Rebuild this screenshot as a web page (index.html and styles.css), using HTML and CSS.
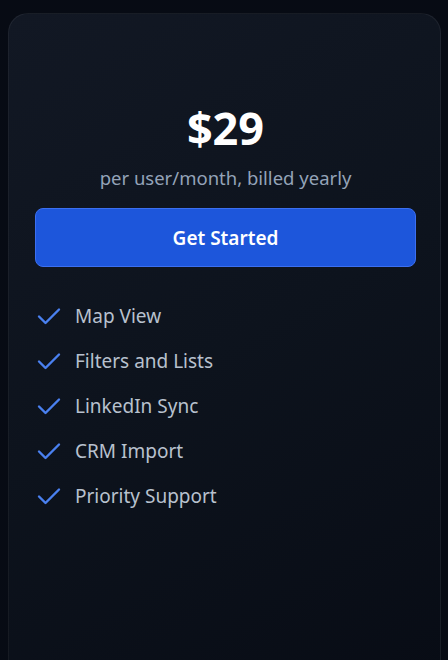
FILE: index.html
```html
<!DOCTYPE html>
<html lang="en">

<head>
    <meta charset="UTF-8">
    <meta name="viewport" content="width=device-width, initial-scale=1.0">
    <title>Pricing</title>
    <link rel="stylesheet" href="styles.css">
</head>

<body>
    <div class="container">
        <div class="plan-card">
            <div class="price">$29</div>
            <p class="price-note">per user/month, billed yearly</p>
            <button type="button" class="start-button">Get Started</button>
            <ul class="features">
                <li>
                    <svg class="check" viewBox="0 0 24 24"><path d="M2 12.5l6.5 6.5L22 5.5" /></svg>
                    <span>Map View</span>
                </li>
                <li>
                    <svg class="check" viewBox="0 0 24 24"><path d="M2 12.5l6.5 6.5L22 5.5" /></svg>
                    <span>Filters and Lists</span>
                </li>
                <li>
                    <svg class="check" viewBox="0 0 24 24"><path d="M2 12.5l6.5 6.5L22 5.5" /></svg>
                    <span>LinkedIn Sync</span>
                </li>
                <li>
                    <svg class="check" viewBox="0 0 24 24"><path d="M2 12.5l6.5 6.5L22 5.5" /></svg>
                    <span>CRM Import</span>
                </li>
                <li>
                    <svg class="check" viewBox="0 0 24 24"><path d="M2 12.5l6.5 6.5L22 5.5" /></svg>
                    <span>Priority Support</span>
                </li>
            </ul>
        </div>
    </div>
</body>

</html>
```

FILE: styles.css
```css
* {
    box-sizing: border-box;
    margin: 0;
    padding: 0;
}

body {
    font-family: "Noto Sans", "Open Sans", sans-serif;
    background: #070b14;
    height: 100vh;
    overflow: hidden;
}

.container {
    height: 100vh;
    padding: 13px 7px 0 8px;
}

.plan-card {
    height: calc(100% + 20px);
    background: linear-gradient(150deg, #121824 0%, #0d131d 50%, #080c15 100%);
    border: 1px solid rgba(255, 255, 255, 0.06);
    border-radius: 20px;
    padding: 91px 24px 0 26px;
    display: flex;
    flex-direction: column;
}

.price {
    font-size: 45px;
    font-weight: 700;
    line-height: 1;
    color: #fff;
    text-align: center;
}

.price-note {
    margin-top: 15px;
    font-size: 18.5px;
    line-height: 26px;
    color: #94a3b8;
    text-align: center;
}

.start-button {
    margin-top: 17px;
    height: 59px;
    border: 1px solid #3c6ff0;
    background: #1d56db;
    color: #fff;
    font-family: inherit;
    font-size: 19px;
    font-weight: 600;
    border-radius: 8px;
    cursor: pointer;
}

.features {
    list-style: none;
    margin-top: 34px;
    display: flex;
    flex-direction: column;
    row-gap: 16px;
}

.features li {
    display: flex;
    align-items: center;
    column-gap: 14px;
    height: 29px;
    padding-left: 2px;
    font-size: 19px;
    color: #b8c1ce;
}

.check {
    width: 24px;
    height: 24px;
    fill: none;
    stroke: #4a80f0;
    stroke-width: 2.4;
    stroke-linecap: round;
    stroke-linejoin: round;
}
```
